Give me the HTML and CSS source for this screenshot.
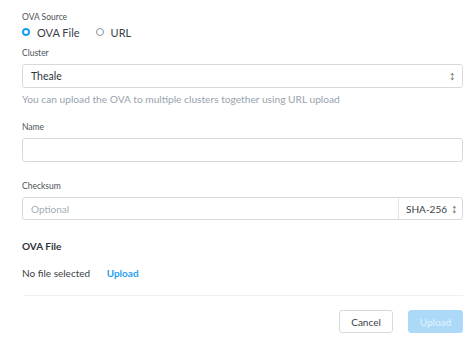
FILE: index.html
```html
<!DOCTYPE html>
<html>

<head>
    <link rel="stylesheet" href="styles.css">
</head>

<body>
    <div class="form">
        <div class="label first">OVA Source</div>
        <div class="radios">
            <label class="radio"><span class="dot checked"></span>OVA File</label>
            <label class="radio"><span class="dot"></span>URL</label>
        </div>

        <div class="label cluster-label">Cluster</div>
        <div class="box select">
            <span class="value">Theale</span>
            <span class="arrows">&#8597;</span>
        </div>
        <div class="help">You can upload the OVA to multiple clusters together using URL upload</div>

        <div class="label name-label">Name</div>
        <div class="box"></div>

        <div class="label checksum-label">Checksum</div>
        <div class="box checksum">
            <span class="placeholder">Optional</span>
            <span class="algo">SHA-256 <span class="arrows">&#8597;</span></span>
        </div>

        <div class="section-title">OVA File</div>
        <div class="file-row">
            <span>No file selected</span>
            <a class="link">Upload</a>
        </div>

        <div class="footer">
            <button class="btn">Cancel</button>
            <button class="btn primary" disabled>Upload</button>
        </div>
    </div>
</body>

</html>
```

FILE: styles.css
```css
body {
    margin: 0;
    background: #fff;
    font-family: Lato, "Open Sans", sans-serif;
    color: #4a4f55;
}

.form {
    padding: 0 11px 0 22px;
}

.label {
    font-size: 8.5px;
    line-height: 12px;
    margin-top: 10px;
    color: #4d5358;
}

.label.first {
    margin-top: 11px;
}

.radios {
    display: flex;
    align-items: center;
    height: 16px;
    margin-top: 1px;
}

.radio {
    display: flex;
    align-items: center;
    font-size: 11px;
    color: #3b4046;
    margin-right: 16px;
}

.dot {
    width: 8px;
    height: 8px;
    box-sizing: border-box;
    border: 1px solid #8a9097;
    border-radius: 50%;
    margin-right: 7px;
}

.dot.checked {
    border: 2.5px solid #1a9ff0;
    background: #fff;
}

.cluster-label {
    margin-top: 7px;
}

.box {
    height: 24px;
    box-sizing: border-box;
    border: 1px solid #d6dadf;
    border-radius: 3px;
    margin-top: 5px;
    display: flex;
    align-items: center;
}

.select {
    padding: 0 7px 0 8px;
    justify-content: space-between;
    font-size: 10.5px;
    color: #30353a;
}

.arrows {
    font-size: 8px;
    color: #555;
    transform: scaleX(0.7);
}

.help {
    font-size: 10.2px;
    color: #97a3ae;
    margin-top: 5px;
    line-height: 12px;
}

.name-label {
    margin-top: 16px;
}

.checksum-label {
    margin-top: 18px;
}

.checksum {
    padding-left: 8px;
    justify-content: space-between;
    margin-top: 5px;
    height: 23px;
}

.placeholder {
    font-size: 10px;
    color: #a5adb5;
}

.algo {
    height: 100%;
    display: flex;
    align-items: center;
    border-left: 1px solid #e2e5e8;
    padding: 0 5px 0 7px;
    font-size: 10px;
    color: #3b4046;
}

.algo .arrows {
    margin-left: 4px;
}

.section-title {
    font-size: 10px;
    font-weight: bold;
    color: #30353a;
    margin-top: 20px;
    line-height: 12px;
}

.file-row {
    font-size: 10px;
    color: #3b4046;
    margin-top: 15px;
    line-height: 12px;
}

.link {
    color: #1f9ff0;
    font-weight: bold;
    margin-left: 14px;
}

.footer {
    margin-top: 16px;
    margin-left: 2px;
    border-top: 1px solid #eef0f2;
    padding-top: 14px;
    display: flex;
    justify-content: flex-end;
    gap: 15px;
}

.btn {
    height: 23px;
    width: 54px;
    padding: 0;
    font-family: Lato, "Open Sans", sans-serif;
    font-size: 10px;
    color: #3b4046;
    background: #fff;
    border: 1px solid #d6dadf;
    border-radius: 3px;
}

.btn.primary {
    width: 55px;
    background: #abd9f7;
    border-color: #abd9f7;
    color: #e3f3fd;
}
```
